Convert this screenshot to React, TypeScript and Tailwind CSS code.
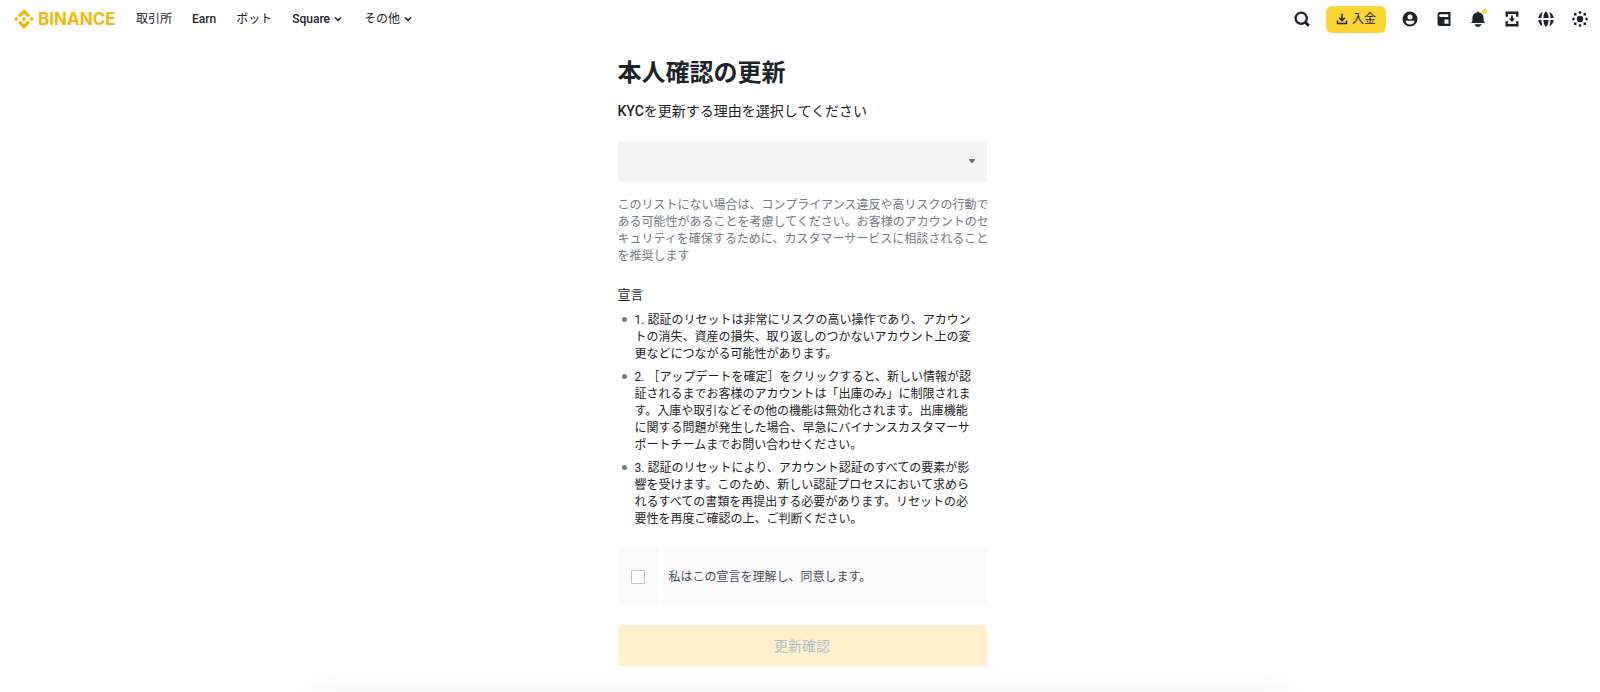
import { useState } from "react"
import { SiBinance } from "react-icons/si"

const navItems = [
  { label: "取引所", latin: false, menu: false },
  { label: "Earn", latin: true, menu: false },
  { label: "ボット", latin: false, menu: false },
  { label: "Square", latin: true, menu: true },
  { label: "その他", latin: false, menu: true },
]

const declarations = [
  "1. 認証のリセットは非常にリスクの高い操作であり、アカウントの消失、資産の損失、取り返しのつかないアカウント上の変更などにつながる可能性があります。",
  "2. ［アップデートを確定］をクリックすると、新しい情報が認証されるまでお客様のアカウントは「出庫のみ」に制限されます。入庫や取引などその他の機能は無効化されます。出庫機能に関する問題が発生した場合、早急にバイナンスカスタマーサポートチームまでお問い合わせください。",
  "3. 認証のリセットにより、アカウント認証のすべての要素が影響を受けます。このため、新しい認証プロセスにおいて求められるすべての書類を再提出する必要があります。リセットの必要性を再度ご確認の上、ご判断ください。",
]

function ChevronIcon() {
  return (
    <svg viewBox="0 0 12 12" className="h-3 w-3" fill="none" stroke="currentColor" strokeWidth="1.6">
      <path d="M3 4.500 6 7.300 9 4.500" />
    </svg>
  )
}

function SearchIcon() {
  return (
    <svg viewBox="0 0 16 16" className="h-4 w-4" fill="none" stroke="currentColor" strokeWidth="2.3">
      <circle cx="7.2" cy="7.2" r="5.6" />
      <path d="M11 11 14.800 14.800" strokeWidth="3" />
    </svg>
  )
}

function DownloadIcon() {
  return (
    <svg viewBox="0 0 12 12" className="h-3 w-3" fill="none" stroke="currentColor" strokeWidth="1.5">
      <path d="M6 .8v6.400M3.200 4.800 6 7.600l2.800-2.800M1.500 7.500v3h9v-3" />
    </svg>
  )
}

function UserIcon() {
  return (
    <svg viewBox="0 0 16 16" className="h-4 w-4" fill="currentColor">
      <path
        fillRule="evenodd"
        d="M8 .5a7.500 7.500 0 1 0 0 15 7.500 7.500 0 0 0 0-15Zm0 2.900a2.500 2.500 0 1 1 0 5 2.500 2.500 0 0 1 0-5ZM3.500 9.800h9A4.500 4.200 0 0 1 8 13.500a4.500 4.200 0 0 1-4.500-3.700Z"
      />
    </svg>
  )
}

function WalletIcon() {
  return (
    <svg viewBox="0 0 16 16" className="h-4 w-4" fill="currentColor">
      <path
        fillRule="evenodd"
        d="M4 1h10.500v14H4A2.500 2.500 0 0 1 1.500 12.500V3.500A2.500 2.500 0 0 1 4 1ZM4.400 3.300a1.300 1.300 0 0 0 0 2.600h7.900V3.300H4.400ZM8.500 8.500v4.200h4V8.500h-4Z"
      />
    </svg>
  )
}

function BellIcon() {
  return (
    <svg viewBox="0 0 16 16" className="h-4 w-4" fill="currentColor">
      <path d="M7.200.6h1.600v.8A5.600 5.600 0 0 1 13.600 7v3l1.400 2H1l1.400-2V7A5.600 5.600 0 0 1 7.200 1.400V.6ZM4.200 13.300h7.600L9.500 15.800h-3Z" />
    </svg>
  )
}

function OrdersIcon() {
  return (
    <svg viewBox="0 0 16 16" className="h-4 w-4" fill="none" stroke="currentColor" strokeWidth="2.400">
      <path d="M2.700 5.800V1.700h10.600v4.100M2.700 10.200v4.100h10.600v-4.100" />
      <path d="M8 4.500v4" strokeWidth="1.800" />
      <path d="M4.900 7.400h6.200L8 11Z" fill="currentColor" stroke="none" />
    </svg>
  )
}

function GlobeIcon() {
  return (
    <svg viewBox="0 0 16 16" className="h-4 w-4" fill="currentColor">
      <path d="M4.800.9A7.700 7.700 0 0 0 .3 7.100h3.200C3.500 4.600 4 2.500 4.800.9ZM11.200.9c.8 1.600 1.300 3.700 1.300 6.200h3.200A7.700 7.700 0 0 0 11.200.9ZM8 .3C6.300 1.600 5.500 4 5.400 7.100h5.200C10.500 4 9.700 1.600 8 .3ZM.3 8.900a7.700 7.700 0 0 0 4.500 6.200C4 13.500 3.500 11.400 3.500 8.900H.3ZM12.500 8.900c0 2.500-.5 4.600-1.300 6.200a7.700 7.700 0 0 0 4.500-6.200h-3.200ZM5.400 8.900c.1 3.100.9 5.500 2.600 6.800 1.700-1.300 2.500-3.700 2.600-6.800H5.400Z" />
    </svg>
  )
}

function SunIcon() {
  return (
    <svg viewBox="0 0 16 16" className="h-4 w-4" fill="currentColor">
      <circle cx="8" cy="8" r="3.200" />
      <path d="M8-.2 9.700 1.500 8 3.200 6.300 1.500ZM8 12.800l1.700 1.700L8 16.200l-1.700-1.700ZM-.2 8l1.700-1.700L3.200 8 1.500 9.700ZM12.800 8l1.700-1.700L16.200 8l-1.700 1.700ZM2 2h2.500v2.500H2ZM11.500 2H14v2.500h-2.500ZM2 11.500h2.500V14H2ZM11.500 11.500H14V14h-2.500Z" />
    </svg>
  )
}

export default function App() {
  const [reason, setReason] = useState("")
  const [agreed, setAgreed] = useState(false)

  return (
    <div className="bg-white font-[Roboto,'Noto_Sans_CJK_JP',sans-serif] text-xs text-[#1e2329]" lang="ja">
      {/* Header */}
      <header className="flex h-[38px] items-center justify-between pr-3 pl-[14px]">
        <div className="flex items-center gap-5">
          <a href="#" className="flex w-[102px] items-center gap-1 text-[#f0b90b]">
            <SiBinance className="h-5 w-5 shrink-0" />
            <span className="font-[Inter,sans-serif] text-[17px] font-bold">BINANCE</span>
          </a>
          <nav className="flex items-center gap-5">
            {navItems.map((item) => (
              <a key={item.label} href="#" className="flex items-center gap-[2px]">
                <span className={item.latin ? "font-medium" : "font-normal"}>{item.label}</span>
                {item.menu && <ChevronIcon />}
              </a>
            ))}
          </nav>
        </div>
        <div className="flex items-center gap-4">
          <button aria-label="検索"><SearchIcon /></button>
          <button className="flex h-[27px] w-[60px] items-center justify-center gap-1 rounded-md bg-[#fcd535]">
            <DownloadIcon />
            入金
          </button>
          <div className="flex items-center gap-[18px]">
            <button aria-label="アカウント"><UserIcon /></button>
            <button aria-label="ウォレット"><WalletIcon /></button>
            <button aria-label="通知" className="relative">
              <BellIcon />
              <span className="absolute -top-[2px] -right-px h-[5px] w-[5px] rounded-full bg-[#fcd535]" />
            </button>
            <button aria-label="注文"><OrdersIcon /></button>
            <button aria-label="言語"><GlobeIcon /></button>
            <button aria-label="テーマ"><SunIcon /></button>
          </div>
        </div>
      </header>

      {/* KYC update form */}
      <main className="flex justify-center pt-[19px] pl-1">
        <form className="w-[369px]" onSubmit={(e) => e.preventDefault()}>
          <h1 className="text-2xl leading-8 font-bold">本人確認の更新</h1>
          <label htmlFor="reason" className="mt-3 block text-sm leading-5">
            <span className="font-medium">KYC</span>を更新する理由を選択してください
          </label>
          <div className="relative mt-5">
            <select
              id="reason"
              value={reason}
              onChange={(e) => setReason(e.target.value)}
              className="block h-[41px] w-full appearance-none rounded-[3px] bg-[#f4f4f4] px-3"
            >
              <option value=""></option>
            </select>
            <svg viewBox="0 0 6 4" className="pointer-events-none absolute top-[18px] right-3 h-1 w-[6px]" fill="#707278">
              <path d="M0 0h6v1L3.500 4h-1L0 1Z" />
            </svg>
          </div>
          <p className="mt-[15px] leading-[17px] whitespace-nowrap text-[#777b82]">
            このリストにない場合は、コンプライアンス違反や高リスクの行動で<br />
            ある可能性があることを考慮してください。お客様のアカウントのセ<br />
            キュリティを確保するために、カスタマーサービスに相談されること<br />
            を推奨します
          </p>

          <h2 className="mt-5 text-[13px] leading-5">宣言</h2>
          <ul className="mt-[7px] space-y-[6px] pl-1">
            {declarations.map((text) => (
              <li key={text} className="flex gap-2">
                <span className="mt-[5px] h-[5px] w-[5px] shrink-0 rounded-full bg-[#777b82]" />
                <span className="w-[340px] leading-[17px]">{text}</span>
              </li>
            ))}
          </ul>

          <div className="mt-5 flex h-[57px] gap-1">
            <div className="flex w-[41px] items-center justify-center rounded-[3px] bg-[#fafafa]">
              <input
                id="agree"
                type="checkbox"
                checked={agreed}
                onChange={(e) => setAgreed(e.target.checked)}
                className="h-[14px] w-[14px] appearance-none rounded-[1px] border border-[#c4c4c4] bg-white checked:bg-[#fcd535]"
              />
            </div>
            <label htmlFor="agree" className="flex flex-1 items-center rounded-[3px] bg-[#fafafa] px-[6px] text-[#474d57]">
              私はこの宣言を理解し、同意します。
            </label>
          </div>

          <button
            type="submit"
            disabled={!agreed}
            className="mt-5 block h-[41px] w-full rounded-[3px] bg-[#fcd535] text-sm disabled:bg-[#fef1cb] disabled:text-[#b7bdc6]"
          >
            更新確認
          </button>
        </form>
      </main>

      {/* Shadow of the panel below */}
      <div className="h-[26px] overflow-hidden">
        <div className="mx-auto mt-[26px] h-10 w-[61%] shadow-[0_0_24px_rgba(0,0,0,0.06)]" />
      </div>
    </div>
  )
}
